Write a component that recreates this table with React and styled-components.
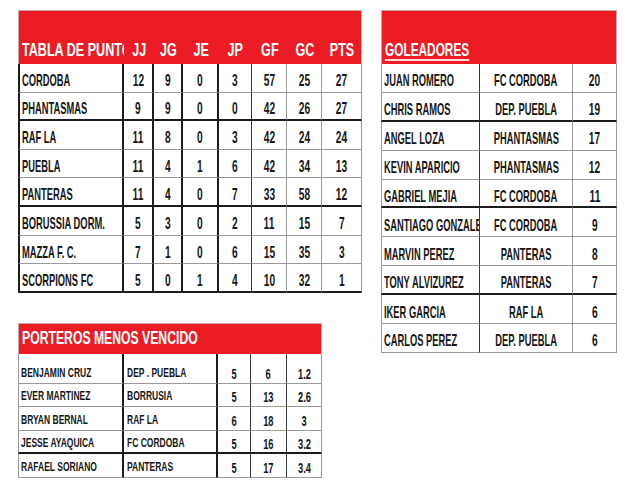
import React from "react";
import styled, { createGlobalStyle } from "styled-components";

const GlobalStyle = createGlobalStyle`
  html, body { margin: 0; padding: 0; background: #ffffff; }
  body { font-family: "Liberation Sans", Arial, sans-serif; }
`;

const RED = "#ec1c24";
const LINE = {
  strong: "2px solid #1c1c1c",
  mid: "1.5px solid #3a3a3a",
  weak: "1px solid #9a9a9a",
};

const Page = styled.div`
  display: flex;
  align-items: flex-start;
  gap: 19px;
  padding: 10px 0 0 18px;
  width: 640px;
  height: 496px;
  box-sizing: border-box;
  overflow: hidden;
`;

const Column = styled.div`
  display: flex;
  flex-direction: column;
  gap: 30px;
`;

const Table = styled.table`
  table-layout: fixed;
  border-collapse: separate;
  border-spacing: 0;
  width: ${(p) => p.$w}px;
`;

const Col = styled.col`
  width: ${(p) => p.$w}px;
`;

const HeadRow = styled.tr`
  height: ${(p) => p.$h}px;
`;

const HeadCell = styled.th`
  box-sizing: border-box;
  background: ${RED};
  color: #ffffff;
  height: ${(p) => p.$h}px;
  padding: 0 0 ${(p) => p.$pb}px ${(p) => (p.$align === "left" ? 3 : 0)}px;
  vertical-align: bottom;
  overflow: hidden;
  white-space: nowrap;
  font-size: 18.5px;
  font-weight: 700;
  line-height: 1;
  border-top: 1px solid #c9a9a9;
  ${(p) => (p.$first ? "border-left: 1px solid #c9a9a9;" : "")}
  ${(p) => (p.$last ? "border-right: 1px solid #c9a9a9;" : "")}
`;

const Cell = styled.td`
  box-sizing: border-box;
  height: ${(p) => p.$h}px;
  padding: ${(p) => p.$pt}px ${(p) => (p.$align === "left" ? 2 : 0)}px 0
    ${(p) => (p.$align === "left" ? p.$pl : 0)}px;
  vertical-align: middle;
  overflow: hidden;
  white-space: nowrap;
  color: #161616;
  font-size: ${(p) => p.$fs}px;
  font-weight: 700;
  line-height: 1;
  border-right: ${(p) => LINE[p.$right]};
  border-bottom: ${(p) => LINE[p.$bottom]};
  ${(p) => (p.$left ? `border-left: ${LINE[p.$left]};` : "")}
`;

const Inner = styled.div`
  display: flex;
  justify-content: ${(p) => (p.$align === "left" ? "flex-start" : "center")};
`;

const Txt = styled.span`
  flex: none;
  display: inline-block;
  white-space: nowrap;
  transform: scaleX(${(p) => p.$s});
  transform-origin: ${(p) => (p.$align === "left" ? "left" : "center")} center;
`;

const Underlined = styled(Txt)`
  text-decoration: underline;
  text-decoration-thickness: 2px;
  text-underline-offset: 3px;
  text-decoration-color: #ffd9d9;
`;

function Label({ align, s, children, underline }) {
  const T = underline ? Underlined : Txt;
  return (
    <Inner $align={align}>
      <T $s={s} $align={align}>
        {children}
      </T>
    </Inner>
  );
}

/* ---------- data ---------- */

const standingsCols = [
  { w: 106, align: "left", right: "strong", label: "TABLA DE PUNTOS" },
  { w: 30, align: "center", right: "strong", label: "JJ" },
  { w: 29, align: "center", right: "strong", label: "JG" },
  { w: 36, align: "center", right: "strong", label: "JE" },
  { w: 33, align: "center", right: "mid", label: "JP" },
  { w: 35, align: "center", right: "weak", label: "GF" },
  { w: 35, align: "center", right: "weak", label: "GC" },
  { w: 40, align: "center", right: "weak", label: "PTS" },
];

const standings = [
  ["CORDOBA", 12, 9, 0, 3, 57, 25, 27],
  ["PHANTASMAS", 9, 9, 0, 0, 42, 26, 27],
  ["RAF LA", 11, 8, 0, 3, 42, 24, 24],
  ["PUEBLA", 11, 4, 1, 6, 42, 34, 13],
  ["PANTERAS", 11, 4, 0, 7, 33, 58, 12],
  ["BORUSSIA DORM.", 5, 3, 0, 2, 11, 15, 7],
  ["MAZZA F. C.", 7, 1, 0, 6, 15, 35, 3],
  ["SCORPIONS FC", 5, 0, 1, 4, 10, 32, 1],
];
const standingsStrong = [1, 4, 7];

const scorerCols = [
  { w: 99, align: "left", right: "mid" },
  { w: 93, align: "center", right: "weak" },
  { w: 44, align: "center", right: "weak" },
];

const scorers = [
  ["JUAN ROMERO", "FC CORDOBA", 20],
  ["CHRIS RAMOS", "DEP. PUEBLA", 19],
  ["ANGEL LOZA", "PHANTASMAS", 17],
  ["KEVIN APARICIO", "PHANTASMAS", 12],
  ["GABRIEL MEJIA", "FC CORDOBA", 11],
  ["SANTIAGO GONZALEZ", "FC CORDOBA", 9],
  ["MARVIN PEREZ", "PANTERAS", 8],
  ["TONY ALVIZUREZ", "PANTERAS", 7],
  ["IKER GARCIA", "RAF LA", 6],
  ["CARLOS PEREZ", "DEP. PUEBLA", 6],
];
const scorersStrong = [1, 4, 7];

const keeperCols = [
  { w: 106, align: "left", right: "strong" },
  { w: 94, align: "left", right: "strong" },
  { w: 33, align: "center", right: "mid" },
  { w: 36, align: "center", right: "mid" },
  { w: 35, align: "center", right: "weak" },
];

const keepers = [
  ["BENJAMIN CRUZ", "DEP . PUEBLA", 5, 6, "1.2"],
  ["EVER MARTINEZ", "BORRUSIA", 5, 13, "2.6"],
  ["BRYAN BERNAL", "RAF LA", 6, 18, "3"],
  ["JESSE AYAQUICA", "FC CORDOBA", 5, 16, "3.2"],
  ["RAFAEL SORIANO", "PANTERAS", 5, 17, "3.4"],
];
const keepersStrong = [3];

/* ---------- tables ---------- */

function Standings() {
  const width = standingsCols.reduce((a, c) => a + c.w, 0);
  return (
    <Table $w={width}>
      <colgroup>
        {standingsCols.map((c, i) => (
          <Col key={i} $w={c.w} />
        ))}
      </colgroup>
      <thead>
        <HeadRow $h={54}>
          {standingsCols.map((c, i) => (
            <HeadCell
              key={i}
              $h={54}
              $pb={5}
              $align={c.align}
              $first={i === 0}
              $last={i === standingsCols.length - 1}
            >
              <Label s={0.68} align={c.align}>
                {c.label}
              </Label>
            </HeadCell>
          ))}
        </HeadRow>
      </thead>
      <tbody>
        {standings.map((row, r) => (
          <tr key={r}>
            {row.map((v, i) => (
              <Cell
                key={i}
                $h={28.6}
                $pt={6}
                $pl={2}
                $fs={17}
                $align={standingsCols[i].align}
                $right={standingsCols[i].right}
                $left={i === 0 ? "strong" : null}
                $bottom={standingsStrong.includes(r) ? "strong" : "weak"}
              >
                <Label s={i === 0 ? 0.55 : 0.6} align={standingsCols[i].align}>
                  {v}
                </Label>
              </Cell>
            ))}
          </tr>
        ))}
      </tbody>
    </Table>
  );
}

function Scorers() {
  const width = scorerCols.reduce((a, c) => a + c.w, 0);
  return (
    <Table $w={width}>
      <colgroup>
        {scorerCols.map((c, i) => (
          <Col key={i} $w={c.w} />
        ))}
      </colgroup>
      <thead>
        <HeadRow $h={54}>
          <HeadCell colSpan={3} $h={54} $pb={5} $align="left" $first $last>
            <Label s={0.64} align="left" underline>
              GOLEADORES
            </Label>
          </HeadCell>
        </HeadRow>
      </thead>
      <tbody>
        {scorers.map((row, r) => (
          <tr key={r}>
            {row.map((v, i) => (
              <Cell
                key={i}
                $h={28.9}
                $pt={6}
                $pl={2}
                $fs={17}
                $align={scorerCols[i].align}
                $right={scorerCols[i].right}
                $left={i === 0 ? "weak" : null}
                $bottom={scorersStrong.includes(r) ? "strong" : "weak"}
              >
                <Label s={i === 2 ? 0.6 : 0.55} align={scorerCols[i].align}>
                  {v}
                </Label>
              </Cell>
            ))}
          </tr>
        ))}
      </tbody>
    </Table>
  );
}

function Keepers() {
  const width = keeperCols.reduce((a, c) => a + c.w, 0);
  return (
    <Table $w={width}>
      <colgroup>
        {keeperCols.map((c, i) => (
          <Col key={i} $w={c.w} />
        ))}
      </colgroup>
      <thead>
        <HeadRow $h={31}>
          <HeadCell colSpan={5} $h={31} $pb={6} $align="left" $first $last>
            <Label s={0.66} align="left">
              PORTEROS MENOS VENCIDO
            </Label>
          </HeadCell>
        </HeadRow>
      </thead>
      <tbody>
        {keepers.map((row, r) => (
          <tr key={r}>
            {row.map((v, i) => (
              <Cell
                key={i}
                $h={r === 0 ? 30 : 23.5}
                $pt={r === 0 ? 10 : 3}
                $pl={i === 0 ? 2 : 3}
                $fs={i < 2 ? 12.5 : 15}
                $align={keeperCols[i].align}
                $right={keeperCols[i].right}
                $left={i === 0 ? "weak" : null}
                $bottom={keepersStrong.includes(r) ? "strong" : "weak"}
              >
                <Label s={i < 2 ? 0.68 : 0.62} align={keeperCols[i].align}>
                  {v}
                </Label>
              </Cell>
            ))}
          </tr>
        ))}
      </tbody>
    </Table>
  );
}

export default function App() {
  return (
    <>
      <GlobalStyle />
      <Page>
        <Column>
          <Standings />
          <Keepers />
        </Column>
        <Scorers />
      </Page>
    </>
  );
}
